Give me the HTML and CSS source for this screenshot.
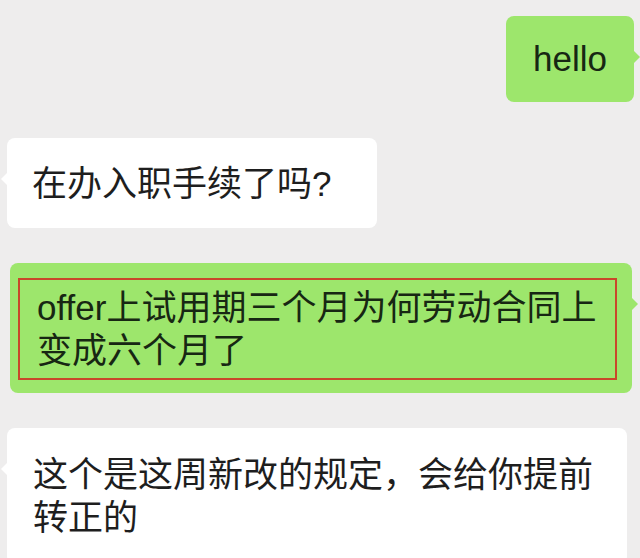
FILE: index.html
```html
<!DOCTYPE html>
<html lang="zh-CN">
<head>
    <meta charset="UTF-8">
    <meta name="viewport" content="width=device-width, initial-scale=1.0">
    <title>聊天记录</title>
    <link rel="stylesheet" href="styles.css">
</head>
<body>
    <div class="chat">
        <div class="row row-me first">
            <div class="bubble bubble-me hello">hello</div>
        </div>

        <div class="row row-other">
            <div class="bubble bubble-other ask">在办入职手续了吗?</div>
        </div>

        <div class="row row-me">
            <div class="bubble bubble-me marked">
                <div class="highlight">offer上试用期三个月为何劳动合同上变成六个月了</div>
            </div>
        </div>

        <div class="row row-other">
            <div class="bubble bubble-other reply">这个是这周新改的规定，会给你提前转正的</div>
        </div>
    </div>
</body>
</html>
```

FILE: styles.css
```css
html,
body {
    margin: 0;
    padding: 0;
    overflow: hidden;
}

body {
    background: #eeeded;
    font-family: 'Liberation Sans', 'Noto Sans CJK SC', sans-serif;
    color: #1c1c1c;
}

.chat {
    height: 558px;
    overflow: hidden;
    display: flex;
    flex-direction: column;
    gap: 35px;
    padding-top: 16px;
    box-sizing: border-box;
}

.row {
    display: flex;
}

.row-me {
    justify-content: flex-end;
}

.row-other {
    justify-content: flex-start;
}

.bubble {
    position: relative;
    border-radius: 8px;
    font-size: 35px;
    line-height: 43px;
}

.bubble::after {
    content: '';
    position: absolute;
    top: 34px;
    border-top: 7px solid transparent;
    border-bottom: 7px solid transparent;
}

.bubble-me {
    background: #9de66c;
    color: #172713;
}

.bubble-me::after {
    right: -6px;
    border-left: 7px solid #9de66c;
}

.bubble-other {
    background: #ffffff;
    color: #1e1e1e;
}

.bubble-other::after {
    left: -6px;
    border-right: 7px solid #ffffff;
}

.hello {
    margin-right: 6px;
    padding: 21px 27px 22px 27px;
}

.ask {
    margin-left: 7px;
    margin-top: 1px;
    padding: 24px 46px 23px 25px;
}

.marked {
    margin-left: 10px;
    margin-right: 8px;
    flex: 1;
    padding: 15px 15px 13px 8px;
}

.highlight {
    border: 2px solid #c9482a;
    padding: 6px 0 6px 17px;
}

.reply {
    margin-left: 7px;
    width: 560px;
    padding: 25px 34px 25px 26px;
}
```
